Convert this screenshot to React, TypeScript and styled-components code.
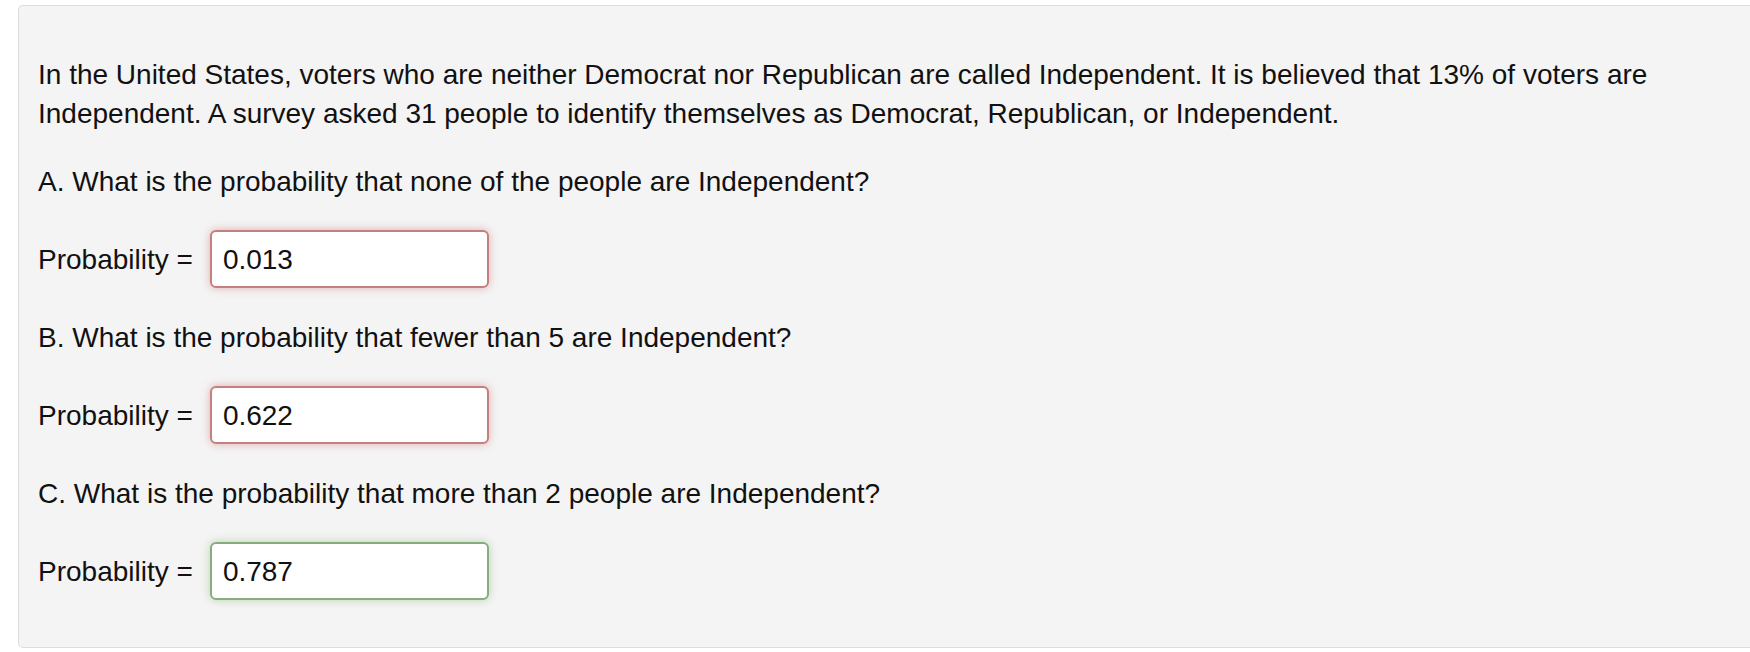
import styled, { createGlobalStyle } from "styled-components"

const GlobalStyle = createGlobalStyle`
  html, body {
    margin: 0;
    padding: 0;
    background: white;
    overflow: hidden;
  }
  body {
    font-family: "Liberation Sans", Arial, Helvetica, sans-serif;
    color: #111;
  }
`

const Page = styled.div`
  padding: 5px 0 0 18px;
`

const Panel = styled.div`
  background-color: #f4f4f4;
  border: 1px solid #dddddd;
  border-right: none;
  border-radius: 5px 0 0 5px;
  padding: 49px 20px 17px 19px;
  font-size: 28px;
  line-height: 39px;
`

const Intro = styled.p`
  margin: 0 0 29px;
`

const Question = styled.p`
  margin: 0 0 29px;
`

const AnswerRow = styled.div`
  display: flex;
  align-items: center;
  gap: 17px;
  margin-bottom: 30px;
`

const Label = styled.span`
  white-space: nowrap;
`

type Status = "wrong" | "correct"

const AnswerBox = styled.div<{ $status: Status }>`
  box-sizing: border-box;
  width: 279px;
  height: 58px;
  padding: 0 11px;
  display: flex;
  align-items: center;
  background: white;
  border-radius: 6px;
  border: 2px solid ${(p) => (p.$status === "correct" ? "#86ad7b" : "#c47f7f")};
  box-shadow: 0 0 8px
    ${(p) => (p.$status === "correct" ? "rgba(110, 170, 90, 0.45)" : "rgba(200, 90, 90, 0.45)")};
  color: #111;
`

interface Part {
  letter: string
  question: string
  answer: string
  status: Status
}

const parts: Part[] = [
  {
    letter: "A",
    question: "What is the probability that none of the people are Independent?",
    answer: "0.013",
    status: "wrong",
  },
  {
    letter: "B",
    question: "What is the probability that fewer than 5 are Independent?",
    answer: "0.622",
    status: "wrong",
  },
  {
    letter: "C",
    question: "What is the probability that more than 2 people are Independent?",
    answer: "0.787",
    status: "correct",
  },
]

const App = () => (
  <>
    <GlobalStyle />
    <Page>
      <Panel>
        <Intro>
          In the United States, voters who are neither Democrat nor Republican are called Independent. It is
          believed that 13% of voters are Independent. A survey asked 31 people to identify themselves as
          Democrat, Republican, or Independent.
        </Intro>

        {parts.map((part) => (
          <div key={part.letter}>
            <Question>
              {part.letter}. {part.question}
            </Question>
            <AnswerRow>
              <Label>Probability =</Label>
              <AnswerBox $status={part.status}>{part.answer}</AnswerBox>
            </AnswerRow>
          </div>
        ))}
      </Panel>
    </Page>
  </>
)

export default App
